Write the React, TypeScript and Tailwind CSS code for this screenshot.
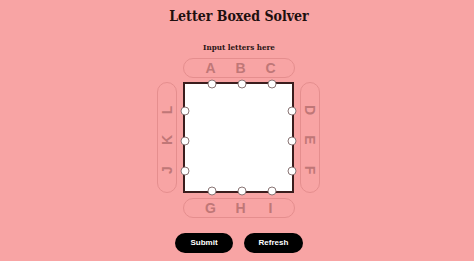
const top = ['A', 'B', 'C'];
const right = ['D', 'E', 'F'];
const bottom = ['G', 'H', 'I'];
const left = ['L', 'K', 'J'];

const dotPos = ['left-[27px]', 'left-[57px]', 'left-[87px]'];
const dotPosY = ['top-[27px]', 'top-[57px]', 'top-[87px]'];

function Dot({ className }: { className: string }) {
  return (
    <span
      className={`absolute h-[9px] w-[9px] -translate-x-1/2 -translate-y-1/2 rounded-full border border-[#8a7676] bg-white ${className}`}
    />
  );
}

function HPill({ letters }: { letters: string[] }) {
  return (
    <div className="relative h-[20px] w-[112px] rounded-[10px] border border-[#e58e8e]">
      {letters.map((l, i) => (
        <span
          key={l}
          className={`absolute top-1/2 -translate-x-1/2 -translate-y-1/2 text-[14px] font-bold leading-none text-[#c07777] ${dotPos[i]}`}
        >
          {l}
        </span>
      ))}
    </div>
  );
}

function VPill({ letters, rotate }: { letters: string[]; rotate: string }) {
  return (
    <div className="relative h-[111px] w-[20px] rounded-[10px] border border-[#e58e8e]">
      {letters.map((l, i) => (
        <span
          key={l}
          className={`absolute left-1/2 -translate-x-1/2 -translate-y-1/2 text-[14px] font-bold leading-none text-[#c07777] ${rotate} ${dotPosY[i]}`}
        >
          {l}
        </span>
      ))}
    </div>
  );
}

export default function App() {
  return (
    <div className="flex h-[261px] w-full flex-col items-center bg-[#f8a4a4] pl-[4px] font-['Liberation_Sans_Narrow','Liberation_Sans',Arial,sans-serif]">
      <h1 className="mt-[6px] font-['DejaVu_Serif',serif] text-[14px] font-bold leading-[20px] text-[#1e0f0f] [font-stretch:condensed]">
        Letter Boxed Solver
      </h1>
      <p className="mt-[15px] font-['DejaVu_Serif',serif] text-[8px] font-bold leading-[12px] text-[#2a1414] [font-stretch:condensed]">
        Input letters here
      </p>
      <div className="mr-[2px] mt-[5px] grid grid-cols-[20px_111px_20px] grid-rows-[19px_111px_20px] gap-x-[6px] gap-y-[5px]">
        <div />
        <HPill letters={top} />
        <div />
        <VPill letters={left} rotate="-rotate-90" />
        <div className="relative border-2 border-[#3b1d1d] bg-white">
          {dotPos.map((p) => (
            <Dot key={'t' + p} className={`top-0 ${p}`} />
          ))}
          {dotPos.map((p) => (
            <Dot key={'b' + p} className={`top-full ${p}`} />
          ))}
          {dotPosY.map((p) => (
            <Dot key={'l' + p} className={`left-0 ${p}`} />
          ))}
          {dotPosY.map((p) => (
            <Dot key={'r' + p} className={`left-full ${p}`} />
          ))}
        </div>
        <VPill letters={right} rotate="rotate-90" />
        <div />
        <HPill letters={bottom} />
        <div />
      </div>
      <div className="mt-[15px] flex gap-[11px]">
        <button className="h-[20px] w-[58px] rounded-full bg-black font-['Liberation_Sans',Arial,sans-serif] text-[8px] font-bold text-white">
          Submit
        </button>
        <button className="h-[20px] w-[59px] rounded-full bg-black font-['Liberation_Sans',Arial,sans-serif] text-[8px] font-bold text-white">
          Refresh
        </button>
      </div>
    </div>
  );
}
